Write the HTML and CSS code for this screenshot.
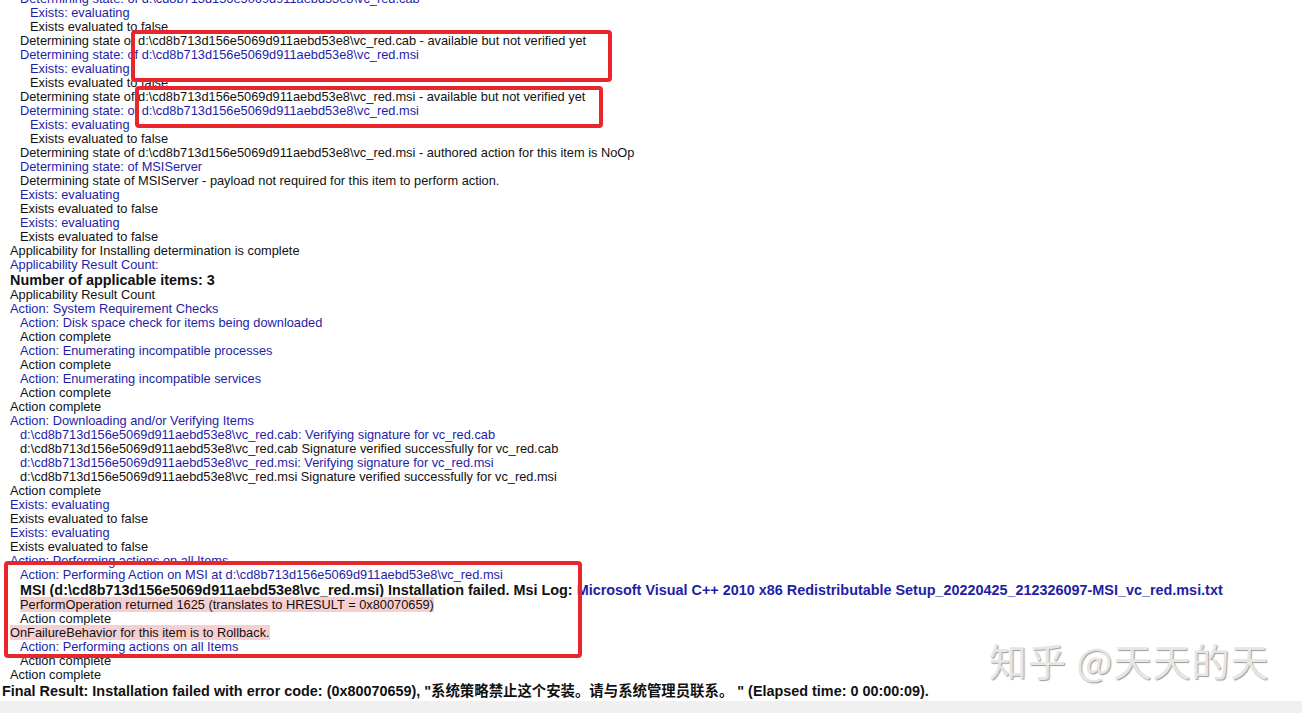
FILE: index.html
```html
<!DOCTYPE html>
<html>
  <head>
    <meta charset="utf-8" />
    <title>vcredist log</title>
    <link rel="stylesheet" href="styles.css">
  </head>
  <body>
    <div class="page">
      <div class="log">
        <div class="l2 info">Determining state: of d:\cd8b713d156e5069d911aebd53e8\vc_red.cab</div>
        <div class="l3 info">Exists: evaluating</div>
        <div class="l3">Exists evaluated to false</div>
        <div class="l2">Determining state of d:\cd8b713d156e5069d911aebd53e8\vc_red.cab - available but not verified yet</div>
        <div class="l2 info">Determining state: of d:\cd8b713d156e5069d911aebd53e8\vc_red.msi</div>
        <div class="l3 info">Exists: evaluating</div>
        <div class="l3">Exists evaluated to false</div>
        <div class="l2">Determining state of d:\cd8b713d156e5069d911aebd53e8\vc_red.msi - available but not verified yet</div>
        <div class="l2 info">Determining state: of d:\cd8b713d156e5069d911aebd53e8\vc_red.msi</div>
        <div class="l3 info">Exists: evaluating</div>
        <div class="l3">Exists evaluated to false</div>
        <div class="l2">Determining state of d:\cd8b713d156e5069d911aebd53e8\vc_red.msi - authored action for this item is NoOp</div>
        <div class="l2 info">Determining state: of MSIServer</div>
        <div class="l2">Determining state of MSIServer - payload not required for this item to perform action.</div>
        <div class="l2 info">Exists: evaluating</div>
        <div class="l2">Exists evaluated to false</div>
        <div class="l2 info">Exists: evaluating</div>
        <div class="l2">Exists evaluated to false</div>
        <div class="l1">Applicability for Installing determination is complete</div>
        <div class="l1 info">Applicability Result Count:</div>
        <div class="l1 big">Number of applicable items: 3</div>
        <div class="l1">Applicability Result Count</div>
        <div class="l1 info">Action: System Requirement Checks</div>
        <div class="l2 info">Action: Disk space check for items being downloaded</div>
        <div class="l2">Action complete</div>
        <div class="l2 info">Action: Enumerating incompatible processes</div>
        <div class="l2">Action complete</div>
        <div class="l2 info">Action: Enumerating incompatible services</div>
        <div class="l2">Action complete</div>
        <div class="l1">Action complete</div>
        <div class="l1 info">Action: Downloading and/or Verifying Items</div>
        <div class="l2 info">d:\cd8b713d156e5069d911aebd53e8\vc_red.cab: Verifying signature for vc_red.cab</div>
        <div class="l2">d:\cd8b713d156e5069d911aebd53e8\vc_red.cab Signature verified successfully for vc_red.cab</div>
        <div class="l2 info">d:\cd8b713d156e5069d911aebd53e8\vc_red.msi: Verifying signature for vc_red.msi</div>
        <div class="l2">d:\cd8b713d156e5069d911aebd53e8\vc_red.msi Signature verified successfully for vc_red.msi</div>
        <div class="l1">Action complete</div>
        <div class="l1 info">Exists: evaluating</div>
        <div class="l1">Exists evaluated to false</div>
        <div class="l1 info">Exists: evaluating</div>
        <div class="l1">Exists evaluated to false</div>
        <div class="l1 info">Action: Performing actions on all Items</div>
        <div class="l2 info">Action: Performing Action on MSI at d:\cd8b713d156e5069d911aebd53e8\vc_red.msi</div>
        <div class="l2 big">MSI (d:\cd8b713d156e5069d911aebd53e8\vc_red.msi) Installation failed. Msi Log: <a class="msi-link" href="#">Microsoft Visual C++ 2010 x86 Redistributable Setup_20220425_212326097-MSI_vc_red.msi.txt</a></div>
        <div class="l2"><span class="fail">PerformOperation returned 1625 (translates to HRESULT = 0x80070659)</span></div>
        <div class="l2">Action complete</div>
        <div class="l1"><span class="fail">OnFailureBehavior for this item is to Rollback.</span></div>
        <div class="l2 info">Action: Performing actions on all Items</div>
        <div class="l2">Action complete</div>
        <div class="l1">Action complete</div>
        <div class="l0 big final">Final Result: Installation failed with error code: (0x80070659), "系统策略禁止这个安装。请与系统管理员联系。 " (Elapsed time: 0 00:00:09).</div>
      </div>
      <div class="strip"></div>

      <!-- red marks drawn over the screenshot -->
      <div class="mark mark-cab"></div>
      <div class="mark mark-msi"></div>
      <div class="mark mark-fail"></div>

      <div class="watermark">知乎 @天天的天</div>
    </div>
  </body>
</html>
```

FILE: styles.css
```css
* {
  margin: 0;
  padding: 0;
  box-sizing: border-box;
}

html,
body {
  width: 100%;
  height: 100%;
  overflow: hidden;
  background: #fff;
}

body {
  font-family: "Liberation Sans", Arial, "Noto Sans CJK SC", sans-serif;
  font-size: 12.8px;
  line-height: 14px;
  color: #111;
}

.page {
  position: relative;
  height: 100%;
  display: flex;
  flex-direction: column;
}

/* first line is cut by the top of the window */
.log {
  margin-top: -8px;
  flex: 1;
  white-space: nowrap;
}

/* indent levels */
.l0 {
  padding-left: 2px;
}

.l1 {
  padding-left: 10px;
}

.l2 {
  padding-left: 20px;
}

.l3 {
  padding-left: 30px;
}

.info {
  color: #1e1ea6;
}

.big {
  font-size: 14.4px;
  font-weight: bold;
  line-height: 16px;
  color: #111;
}

.final {
  line-height: 19px;
}

.msi-link {
  color: #1e1ea6;
  text-decoration: none;
}

.fail {
  background: #f7cfd0;
}

.strip {
  height: 13px;
  background: #f0f0f0;
  flex-shrink: 0;
}

.mark {
  position: absolute;
  border: 4px solid #e8262b;
  border-radius: 4px;
}

.mark-cab {
  left: 131px;
  top: 30px;
  width: 481px;
  height: 52px;
}

.mark-msi {
  left: 135px;
  top: 86px;
  width: 468px;
  height: 42px;
}

.mark-fail {
  left: 4px;
  top: 561px;
  width: 578px;
  height: 97px;
}

.watermark {
  position: absolute;
  left: 989px;
  top: 636px;
  font-family: "Noto Sans CJK SC", sans-serif;
  font-size: 38px;
  line-height: 48px;
  letter-spacing: 1px;
  color: #e6e6e6;
  text-shadow: 1px 1px 1px #9c9c9c;
  white-space: nowrap;
}
```
